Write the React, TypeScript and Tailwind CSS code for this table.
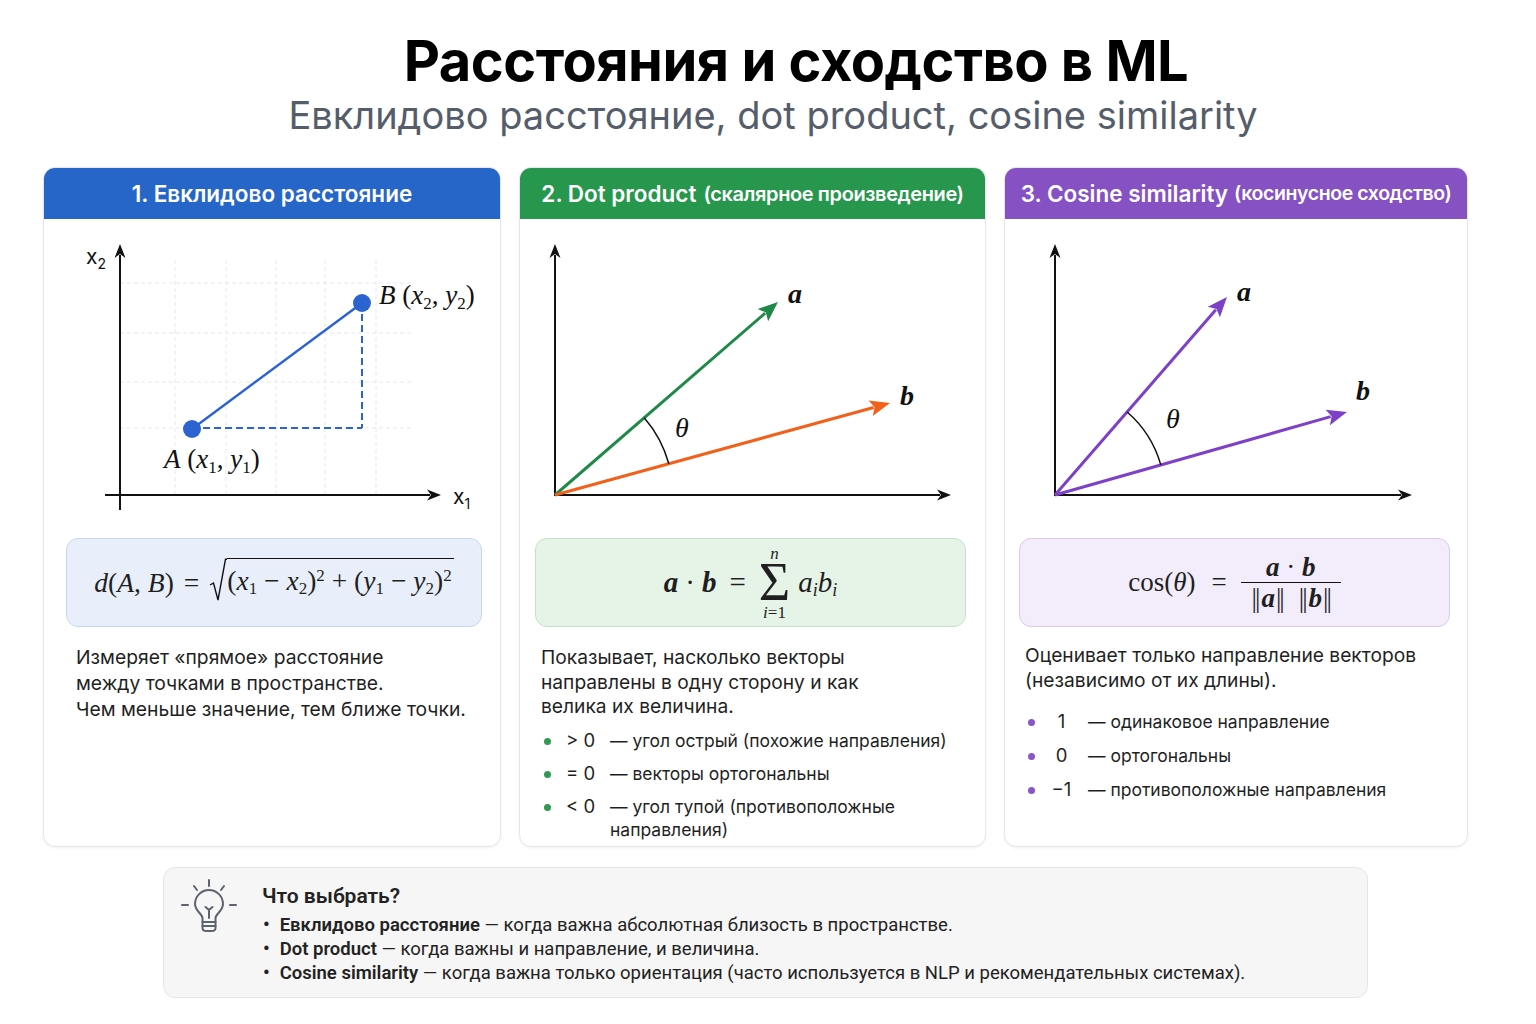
import React from "react";

const serif = "font-['Liberation_Serif','DejaVu_Serif',serif]";

function Arrow({ x1, y1, x2, y2, color, w = 3, head = 18, half = 7 }: { x1: number; y1: number; x2: number; y2: number; color: string; w?: number; head?: number; half?: number }) {
  const a = Math.atan2(y2 - y1, x2 - x1);
  const dx = Math.cos(a), dy = Math.sin(a);
  const bx = x2 - dx * head, by = y2 - dy * head;
  const px = -dy * half, py = dx * half;
  return (
    <g>
      <line x1={x1} y1={y1} x2={bx + dx * 3} y2={by + dy * 3} stroke={color} strokeWidth={w} />
      <polygon points={`${x2},${y2} ${bx + px},${by + py} ${bx + dx * 4},${by + dy * 4} ${bx - px},${by - py}`} fill={color} />
    </g>
  );
}

function Axes({ ox, top, right, left, bottom }: { ox: number; top: number; right: number; left: number; bottom: number }) {
  return (
    <g>
      <Arrow x1={ox} y1={bottom} x2={ox} y2={top} color="#111" w={2} head={14} half={5.5} />
      <Arrow x1={left} y1={276} x2={right} y2={276} color="#111" w={2} head={14} half={5.5} />
    </g>
  );
}

function Pt({ name, i }: { name: string; i: string }) {
  return (
    <>
      <tspan fontStyle="italic">{name}</tspan> (<tspan fontStyle="italic">x</tspan>
      <tspan fontSize="17" dy="5">{i}</tspan>
      <tspan dy="-5">, </tspan>
      <tspan fontStyle="italic">y</tspan>
      <tspan fontSize="17" dy="5">{i}</tspan>
      <tspan dy="-5">)</tspan>
    </>
  );
}

function EuclidChart() {
  const vx = [131, 182, 232, 281, 332];
  const hy = [64, 114, 163, 209];
  return (
    <svg width="456" height="319" className="shrink-0">
      {vx.map((x) => (
        <line key={x} x1={x} y1={41} x2={x} y2={276} stroke="#e6e8ec" strokeWidth={1} strokeDasharray="4 3" />
      ))}
      {hy.map((y) => (
        <line key={y} x1={76} y1={y} x2={367} y2={y} stroke="#e6e8ec" strokeWidth={1} strokeDasharray="4 3" />
      ))}
      <Axes ox={76} top={25} right={397} left={61} bottom={291} />
      <text x="42" y="45" fontFamily="Inter, sans-serif" fontSize="21" fill="#111">
        x<tspan fontSize="14" dy="5">2</tspan>
      </text>
      <text x="409" y="285" fontFamily="Inter, sans-serif" fontSize="21" fill="#111">
        x<tspan fontSize="14" dy="5">1</tspan>
      </text>
      <line x1={148} y1={209} x2={318} y2={209} stroke="#2b63d0" strokeWidth={2} strokeDasharray="7 4" />
      <line x1={318} y1={84} x2={318} y2={209} stroke="#2b63d0" strokeWidth={2} strokeDasharray="7 4" />
      <line x1={148} y1={210} x2={318} y2={84} stroke="#2b63d0" strokeWidth={2.5} />
      <circle cx={148} cy={210} r={9} fill="#2b63d0" />
      <circle cx={318} cy={84} r={9} fill="#2b63d0" />
      <text x="120" y="249" fontFamily="'Liberation Serif', serif" fontSize="27" fill="#111">
        <Pt name="A" i="1" />
      </text>
      <text x="335" y="85" fontFamily="'Liberation Serif', serif" fontSize="27" fill="#111">
        <Pt name="B" i="2" />
      </text>
    </svg>
  );
}

function VectorChart({ ox, right, a, b, ca, cb, la, lb, th, arc, width }: {
  ox: number; right: number; a: [number, number]; b: [number, number]; ca: string; cb: string;
  la: [number, number]; lb: [number, number]; th: [number, number]; arc: string; width: number;
}) {
  return (
    <svg width={width} height="319" className="shrink-0">
      <Axes ox={ox} top={25} right={right} left={ox} bottom={277} />
      <Arrow x1={ox} y1={276} x2={a[0]} y2={a[1]} color={ca} w={3} head={20} half={8} />
      <Arrow x1={ox} y1={276} x2={b[0]} y2={b[1]} color={cb} w={3} head={20} half={8} />
      <path d={arc} stroke="#111" strokeWidth={1.5} fill="none" />
      <text x={la[0]} y={la[1]} fontFamily="'Liberation Serif', serif" fontWeight="bold" fontStyle="italic" fontSize="28" fill="#111">a</text>
      <text x={lb[0]} y={lb[1]} fontFamily="'Liberation Serif', serif" fontWeight="bold" fontStyle="italic" fontSize="28" fill="#111">b</text>
      <text x={th[0]} y={th[1]} fontFamily="'Liberation Serif', serif" fontStyle="italic" fontSize="28" fill="#111">θ</text>
    </svg>
  );
}

function Bullet({ dot, value, children, valueW }: { dot: string; value: React.ReactNode; children: React.ReactNode; valueW: string }) {
  return (
    <li className="flex items-start">
      <span className={`mt-[9px] h-[7px] w-[7px] shrink-0 rounded-full ${dot}`} />
      <span className={`shrink-0 text-center text-[18.5px] leading-[23px] ${valueW}`}>{value}</span>
      <span className="flex-1">— {children}</span>
    </li>
  );
}

function Bulb() {
  return (
    <svg width="58" height="58" viewBox="0 0 58 58" fill="none" stroke="#5b6270" strokeWidth="2" strokeLinecap="round" strokeLinejoin="round">
      <line x1="29" y1="2" x2="29" y2="8" />
      <line x1="14" y1="8" x2="17" y2="12" />
      <line x1="44" y1="8" x2="41" y2="12" />
      <line x1="2" y1="27" x2="8" y2="27" />
      <line x1="50" y1="27" x2="56" y2="27" />
      <path d="M22.5 44 L22.5 40 C22.5 36 15 33 15 26 A14 14 0 0 1 43 26 C43 33 35.5 36 35.5 40 L35.5 44 Z" />
      <path d="M29 40 L29 32 M29 32 L25.5 29 M29 32 L32.5 29" />
      <line x1="22.5" y1="48" x2="35.5" y2="48" />
      <path d="M22.5 44 L22.5 50 C22.5 52 24.5 53 26.5 53 L31.5 53 C33.5 53 35.5 52 35.5 50 L35.5 44" />
    </svg>
  );
}

export default function App() {
  return (
    <div className="w-[1536px] h-[1024px] bg-white pt-[32px] font-['Inter',sans-serif] text-[#1f1f1f]">
      <h1 className="pl-[56px] text-center text-[56px] leading-[58px] font-bold text-black tracking-[-0.5px]">Расстояния и сходство в ML</h1>
      <p className="mt-[4px] pl-[10px] text-center text-[38px] leading-[42px] text-[#555d6b]">Евклидово расстояние, dot product, cosine similarity</p>

      <div className="mt-[31px] ml-[43px] grid grid-cols-[458px_467px_464px] gap-x-[18px]">
        {/* 1 */}
        <div className="flex h-[680px] flex-col overflow-hidden rounded-xl border border-[#e4e6ea] bg-white shadow-[0_1px_3px_rgba(0,0,0,0.05)]">
          <div className="flex h-[51px] shrink-0 items-center justify-center bg-[#2766c9] text-[22.5px] font-semibold text-white">1. Евклидово расстояние</div>
          <EuclidChart />
          <div className={`ml-[22px] mr-[18px] flex h-[89px] shrink-0 items-center justify-center rounded-xl border border-[#c6d7f1] bg-[#e8effa] text-[27.5px] ${serif}`}>
            <i>d</i>(<i>A</i>,&nbsp;<i>B</i>)<span className="mx-[10px]">=</span>
            <span className="flex items-start">
              <svg width="18" height="46" viewBox="0 0 18 46" className="mt-[-4px]">
                <path d="M1 27 L4.5 25 L9 42 L16.5 1.2 L18 1.2" stroke="#111" strokeWidth="1.4" fill="none" />
              </svg>
              <span className="mt-[-4px] border-t-[1.4px] border-[#111] pt-[1px] pr-[2px]">
                (<i>x</i><sub className="text-[17px]">1</sub> − <i>x</i><sub className="text-[17px]">2</sub>)<sup className="text-[17px]">2</sup> + (<i>y</i><sub className="text-[17px]">1</sub> − <i>y</i><sub className="text-[17px]">2</sub>)<sup className="text-[17px]">2</sup>
              </span>
            </span>
          </div>
          <p className="mt-[17px] ml-[32px] text-[19.3px] leading-[26px]">
            Измеряет «прямое» расстояние<br />между точками в пространстве.<br />Чем меньше значение, тем ближе точки.
          </p>
        </div>

        {/* 2 */}
        <div className="flex h-[680px] flex-col overflow-hidden rounded-xl border border-[#e4e6ea] bg-white shadow-[0_1px_3px_rgba(0,0,0,0.05)]">
          <div className="flex h-[51px] shrink-0 items-center justify-center gap-[7px] bg-[#26974c] text-white">
            <span className="text-[22.5px] font-semibold">2. Dot product</span>
            <span className="text-[20px] font-semibold tracking-[-0.4px]">(скалярное произведение)</span>
          </div>
          <VectorChart width={465} ox={35} right={431} a={[258, 83]} b={[370, 184]} ca="#1f8a48" cb="#f0611b" la={[268, 84]} lb={[380, 186]} th={[155, 218]} arc="M124.2 198.7 A118 118 0 0 1 148.8 244.7" />
          <div className={`ml-[15px] mr-[19px] flex h-[89px] shrink-0 items-center justify-center rounded-xl border border-[#c3e3c9] bg-[#e6f4e8] text-[29px] ${serif}`}>
            <b><i>a</i></b><span className="mx-[7px]">·</span><b><i>b</i></b><span className="mx-[13px]">=</span>
            <span className="flex flex-col items-center">
              <i className="h-[17px] text-[17px] leading-[17px]">n</i>
              <span className="h-[40px] text-[54px] leading-[40px]">Σ</span>
              <span className="mt-[2px] h-[17px] text-[17px] leading-[17px]"><i>i</i>=1</span>
            </span>
            <span className="ml-[8px]"><i>a</i><sub className="text-[18px]"><i>i</i></sub><i>b</i><sub className="text-[18px]"><i>i</i></sub></span>
          </div>
          <p className="mt-[18px] ml-[21px] text-[19.2px] leading-[24.5px]">
            Показывает, насколько векторы<br />направлены в одну сторону и как<br />велика их величина.
          </p>
          <ul className="mt-[10px] ml-[24px] mr-[14px] flex flex-col gap-[10px] text-[17.5px] leading-[23px]">
            <Bullet dot="bg-[#2e9a52]" valueW="w-[59px]" value={<>&gt;&nbsp;0</>}>угол острый (похожие направления)</Bullet>
            <Bullet dot="bg-[#2e9a52]" valueW="w-[59px]" value={<>=&nbsp;0</>}>векторы ортогональны</Bullet>
            <Bullet dot="bg-[#2e9a52]" valueW="w-[59px]" value={<>&lt;&nbsp;0</>}>угол тупой (противоположные направления)</Bullet>
          </ul>
        </div>

        {/* 3 */}
        <div className="flex h-[680px] flex-col overflow-hidden rounded-xl border border-[#e4e6ea] bg-white shadow-[0_1px_3px_rgba(0,0,0,0.05)]">
          <div className="flex h-[51px] shrink-0 items-center justify-center gap-[6px] bg-[#8551c3] text-white">
            <span className="text-[22.5px] font-semibold">3. Cosine similarity</span>
            <span className="text-[19.5px] font-semibold tracking-[-0.4px]">(косинусное сходство)</span>
          </div>
          <VectorChart width={462} ox={50} right={407} a={[222, 78]} b={[342, 193]} ca="#7d40c6" cb="#7d40c6" la={[232, 82]} lb={[351, 181]} th={[161, 209]} arc="M122.2 193 A110 110 0 0 1 155.8 245.9" />
          <div className={`ml-[14px] mr-[17px] flex h-[89px] shrink-0 items-center justify-center rounded-xl border border-[#dbc9f0] bg-[#f2ecfb] text-[27px] ${serif}`}>
            <span className="mr-[2px]">cos(<i>θ</i>)</span><span className="mx-[14px]">=</span>
            <span className="flex flex-col items-center leading-[30px]">
              <span className="px-[4px]"><b><i>a</i></b> · <b><i>b</i></b></span>
              <span className="h-[1.4px] w-[100px] bg-[#111]" />
              <span className="flex items-center px-[4px]">
                <span className="tracking-[-2px]">||</span><b className="ml-[3px]"><i>a</i></b><span className="ml-[1px] tracking-[-2px]">||</span>
                <span className="ml-[16px] tracking-[-2px]">||</span><b className="ml-[3px]"><i>b</i></b><span className="ml-[1px] tracking-[-2px]">||</span>
              </span>
            </span>
          </div>
          <p className="mt-[16px] ml-[20px] text-[19.2px] leading-[24.5px]">
            Оценивает только направление векторов<br />(независимо от их длины).
          </p>
          <ul className="mt-[18px] ml-[23px] flex flex-col gap-[11px] text-[17.5px] leading-[23px]">
            <Bullet dot="bg-[#8a55c8]" valueW="w-[53px]" value="1">одинаковое направление</Bullet>
            <Bullet dot="bg-[#8a55c8]" valueW="w-[53px]" value="0">ортогональны</Bullet>
            <Bullet dot="bg-[#8a55c8]" valueW="w-[53px]" value="−1">противоположные направления</Bullet>
          </ul>
        </div>
      </div>

      <div className="mt-[20px] ml-[163px] flex h-[131px] w-[1205px] rounded-xl border border-[#e6e6e6] bg-[#f6f6f6] font-['Roboto',sans-serif]">
        <div className="ml-[16px] mt-[10px] shrink-0">
          <Bulb />
        </div>
        <div className="ml-[24px] mt-[15px]">
          <div className="text-[21px] font-semibold leading-[26px] text-[#222]">Что выбрать?</div>
          <ul className="mt-[4px] flex flex-col text-[18.5px] leading-[24px] text-[#222]">
            <li className="flex"><span className="ml-[1px] mr-[10px] font-bold">•</span><span><b className="font-semibold">Евклидово расстояние</b> — когда важна абсолютная близость в пространстве.</span></li>
            <li className="flex"><span className="ml-[1px] mr-[10px] font-bold">•</span><span><b className="font-semibold">Dot product</b> — когда важны и направление, и величина.</span></li>
            <li className="flex"><span className="ml-[1px] mr-[10px] font-bold">•</span><span><b className="font-semibold">Cosine similarity</b> — когда важна только ориентация (часто используется в NLP и рекомендательных системах).</span></li>
          </ul>
        </div>
      </div>
    </div>
  );
}
